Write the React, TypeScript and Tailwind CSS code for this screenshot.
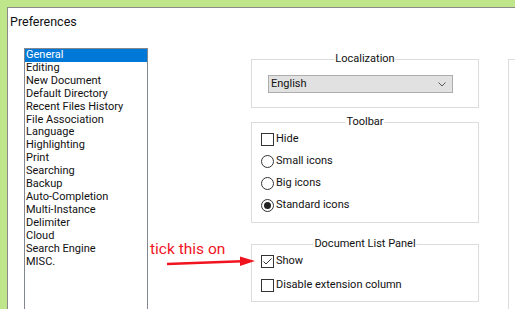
const categories = [
  "General",
  "Editing",
  "New Document",
  "Default Directory",
  "Recent Files History",
  "File Association",
  "Language",
  "Highlighting",
  "Print",
  "Searching",
  "Backup",
  "Auto-Completion",
  "Multi-Instance",
  "Delimiter",
  "Cloud",
  "Search Engine",
  "MISC.",
];

function GroupBox({ title, className, children }: { title: string; className: string; children?: React.ReactNode }) {
  return (
    <div className={`relative border border-[#dcdcdc] ${className}`}>
      <span className="absolute left-1/2 -top-[8px] -translate-x-1/2 bg-white px-[1px] leading-[14px] whitespace-nowrap">
        {title}
      </span>
      {children}
    </div>
  );
}

function CheckBox({ checked, label }: { checked?: boolean; label: string }) {
  return (
    <div className="flex items-center gap-[2px]">
      <span className="flex h-[13px] w-[13px] items-center justify-center border border-[#333]">
        {checked && (
          <svg width="11" height="11" viewBox="0 0 11 11">
            <path d="M1.5 5.5 L4 8 L9.5 2.5" fill="none" stroke="#333" strokeWidth="1" />
          </svg>
        )}
      </span>
      <span>{label}</span>
    </div>
  );
}

function Radio({ checked, label }: { checked?: boolean; label: string }) {
  return (
    <div className="flex items-center gap-[2px]">
      <span className="flex h-[13px] w-[13px] items-center justify-center rounded-full border border-[#333]">
        {checked && <span className="h-[7px] w-[7px] rounded-full bg-[#222]" />}
      </span>
      <span>{label}</span>
    </div>
  );
}

export default function App() {
  return (
    <div
      className="relative h-[309px] w-[515px] overflow-hidden bg-[#c0e68c] pl-[7px] pt-[7px] text-[11px] text-[#111]"
      style={{ fontFamily: 'Roboto, "Noto Sans", sans-serif' }}
    >
      <div className="h-full border-l border-t border-[#8a8a8a] bg-white">
        <div className="pl-[2px] pt-[4px] text-[12.5px] leading-[20px]">Preferences</div>

        <div className="mt-[16px] flex items-start">
          {/* category list */}
          <div className="ml-[16px] h-[270px] w-[124px] shrink-0 border border-[#828790] bg-white">
            {categories.map((c, i) => (
              <div
                key={c}
                className={`pl-[1px] leading-[12.9px] whitespace-nowrap ${i === 0 ? "bg-[#0078d7] text-white" : ""}`}
              >
                {c}
              </div>
            ))}
          </div>

          {/* settings column */}
          <div className="ml-[103px] mt-[11px] w-[228px] shrink-0">
            <GroupBox title="Localization" className="h-[49px] pl-[16px] pt-[15px]">
              <div className="flex h-[18px] w-[185px] items-center justify-between border border-[#adadad] bg-[#e1e1e1] pl-[2px] pr-[6px]">
                <span>English</span>
                <svg width="8" height="5" viewBox="0 0 8 5">
                  <path d="M0.5 0.5 L4 4 L7.5 0.5" fill="none" stroke="#555" strokeWidth="1" />
                </svg>
              </div>
            </GroupBox>

            <GroupBox title="Toolbar" className="mt-[14px] h-[101px] pl-[9px] pt-[5px]">
              <div className="flex h-[22px] items-center">
                <CheckBox label="Hide" />
              </div>
              <div className="flex h-[22px] items-center">
                <Radio label="Small icons" />
              </div>
              <div className="flex h-[22px] items-center">
                <Radio label="Big icons" />
              </div>
              <div className="flex h-[22px] items-center">
                <Radio checked label="Standard icons" />
              </div>
            </GroupBox>

            <GroupBox title="Document List Panel" className="mt-[21px] h-[58px] pl-[9px] pt-[4px]">
              <div className="flex h-[24px] items-center">
                <CheckBox checked label="Show" />
              </div>
              <div className="flex h-[24px] items-center">
                <CheckBox label="Disable extension column" />
              </div>
            </GroupBox>
          </div>

          <div className="ml-[29px] mt-[11px] h-[260px] w-[40px] shrink-0 border border-[#dcdcdc]" />
        </div>
      </div>

      {/* annotation */}
      <div className="absolute left-[150px] top-[239px] text-[15.5px] leading-[20px] text-[#f0141e]">tick this on</div>
      <svg className="absolute left-[160px] top-[252px]" width="100" height="16" viewBox="0 0 100 16">
        <path d="M7 12 L82 9.3" stroke="#f0141e" strokeWidth="2.5" fill="none" />
        <path d="M80 4.5 L95 9 L80 14 Z" fill="#f0141e" />
      </svg>
    </div>
  );
}
